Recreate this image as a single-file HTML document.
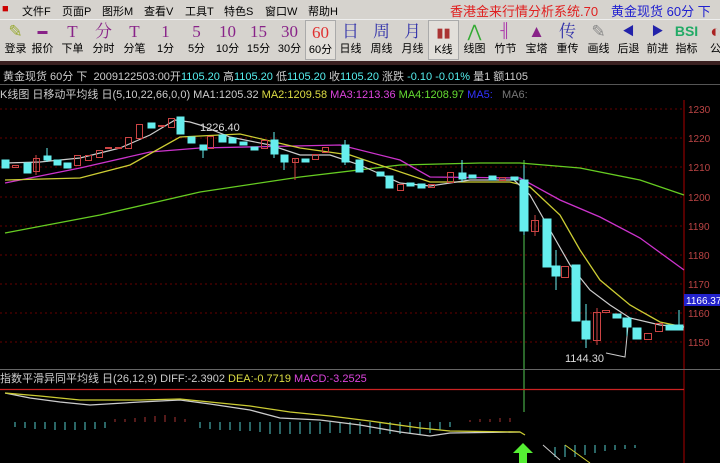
<!DOCTYPE html>
<html><head><meta charset="utf-8">
<style>
*{margin:0;padding:0;box-sizing:border-box}
body{width:720px;height:463px;overflow:hidden;background:#000;font-family:"Liberation Sans","WenQuanYi Zen Hei","Noto Sans CJK SC",sans-serif;position:relative}
.menu{position:absolute;left:0;top:0;width:720px;height:19px;background:#d6d3ce;font-size:11px;color:#000}
.menu span{position:absolute;top:3px}
.tb{position:absolute;left:0;top:19px;width:720px;height:42px;background:#d6d3ce;border-top:1px solid #eee}
.it{position:absolute;top:0;width:31px;text-align:center}
.it b{display:block;font-size:17px;line-height:21px;font-weight:normal;font-family:"Liberation Serif","Noto Serif CJK SC",serif;margin-top:1px}
.it i{display:block;font-style:normal;font-size:11px;color:#000;line-height:14px}
.box{border:1px solid #aaa;background:#e2dfda;height:40px}
.sep{position:absolute;left:0;top:61px;width:720px;height:4px;background:#3a2020}
.info{position:absolute;left:0;top:65px;width:720px;height:18px;background:#000;font-size:11px;color:#ccc;white-space:nowrap;padding:3px 0 0 3px}
.ind{position:absolute;left:0;top:84px;width:720px;height:15px;font-size:11px;color:#ccc;white-space:nowrap;padding:1px 0 0 0;border-top:1px solid #555}
.c{color:#5ee}
</style></head><body>
<div class="menu">
<span style="left:2px;color:#c00">■</span>
<span style="left:22px">文件F</span><span style="left:62px">页面P</span><span style="left:102px">图形M</span><span style="left:144px">查看V</span><span style="left:185px">工具T</span><span style="left:224px">特色S</span><span style="left:265px">窗口W</span><span style="left:308px">帮助H</span>
<span style="left:450px;color:#e02020;font-size:13px;top:1px">香港金来行情分析系统.70</span><span style="left:611px;color:#2020d0;font-size:13px;top:1px">黄金现货 60分 下</span>
</div>
<div class="tb">
<div class="it" style="left:0"><b style="color:#9a3">✎</b><i>登录</i></div>
<div class="it" style="left:27px"><b style="color:#828;font-size:10px;line-height:21px">▬</b><i>报价</i></div>
<div class="it" style="left:57px"><b style="color:#828">T</b><i>下单</i></div>
<div class="it" style="left:88px"><b style="color:#828">分</b><i>分时</i></div>
<div class="it" style="left:119px"><b style="color:#828">T</b><i>分笔</i></div>
<div class="it" style="left:150px"><b style="color:#828">1</b><i>1分</i></div>
<div class="it" style="left:181px"><b style="color:#828">5</b><i>5分</i></div>
<div class="it" style="left:212px"><b style="color:#828">10</b><i>10分</i></div>
<div class="it" style="left:243px"><b style="color:#828">15</b><i>15分</i></div>
<div class="it" style="left:274px"><b style="color:#828">30</b><i>30分</i></div>
<div class="it box" style="left:305px"><b style="color:#e03030">60</b><i>60分</i></div>
<div class="it" style="left:335px"><b style="color:#33a">日</b><i>日线</i></div>
<div class="it" style="left:366px"><b style="color:#33a">周</b><i>周线</i></div>
<div class="it" style="left:397px"><b style="color:#33a">月</b><i>月线</i></div>
<div class="it box" style="left:428px"><b style="color:#a33;font-size:13px">▮▮</b><i>K线</i></div>
<div class="it" style="left:459px"><b style="color:#3a3">⋀</b><i>线图</i></div>
<div class="it" style="left:490px"><b style="color:#a3a;font-size:14px">╢</b><i>竹节</i></div>
<div class="it" style="left:521px"><b style="color:#828">▲</b><i>宝塔</i></div>
<div class="it" style="left:552px"><b style="color:#33a">传</b><i>重传</i></div>
<div class="it" style="left:583px"><b style="color:#888">✎</b><i>画线</i></div>
<div class="it" style="left:613px"><b style="color:#22a;font-size:12px">◀</b><i>后退</i></div>
<div class="it" style="left:642px"><b style="color:#22a;font-size:12px">▶</b><i>前进</i></div>
<div class="it" style="left:671px"><b style="color:#2a6;font-size:14px;font-weight:bold;font-family:'Liberation Sans'">BSI</b><i>指标</i></div>
<div class="it" style="left:700px"><b style="color:#a22">◐</b><i>公</i></div>
</div>
<div class="sep"></div>
<div class="info">黄金现货 60分 下 &nbsp;2009122503:00开<span class="c">1105.20</span> 高<span class="c">1105.20</span> 低<span class="c">1105.20</span> 收<span class="c">1105.20</span> 涨跌 <span class="c">-0.10 -0.01%</span> 量1 额1105</div>
<div class="ind">K线图 日移动平均线 日(5,10,22,66,0,0) MA1:1205.32 <span style="color:#dd4">MA2:1209.58</span> <span style="color:#d4d">MA3:1213.36</span> <span style="color:#6d3">MA4:1208.97</span> <span style="color:#33f">MA5:</span> &nbsp; <span style="color:#777">MA6:</span></div>
<svg style="position:absolute;left:0;top:0" width="720" height="463" viewBox="0 0 720 463">
<g stroke="#600" stroke-dasharray="2 3" stroke-width="1">
<line x1="0" y1="109" x2="684" y2="109"/><line x1="0" y1="138" x2="684" y2="138"/><line x1="0" y1="167" x2="684" y2="167"/><line x1="0" y1="197" x2="684" y2="197"/><line x1="0" y1="226" x2="684" y2="226"/><line x1="0" y1="255" x2="684" y2="255"/><line x1="0" y1="284" x2="684" y2="284"/><line x1="0" y1="313" x2="684" y2="313"/><line x1="0" y1="342" x2="684" y2="342"/>
</g>
<line x1="684" y1="100" x2="684" y2="463" stroke="#a00"/>
<g fill="#b44" font-size="10" font-family="Liberation Sans">
<text x="688" y="113">1230</text><text x="688" y="142">1220</text><text x="688" y="171">1210</text><text x="688" y="201">1200</text><text x="688" y="230">1190</text><text x="688" y="259">1180</text><text x="688" y="288">1170</text><text x="688" y="317">1160</text><text x="688" y="346">1150</text>
</g>
<rect x="684" y="294" width="36" height="12" fill="#22c"/><text x="686" y="304" fill="#fff" font-size="10" font-family="Liberation Sans">1166.37</text>
<line x1="524" y1="160" x2="524" y2="412" stroke="#5c5"/>
<polyline fill="none" stroke="#6c2" stroke-width="1.3" points="5,233 100,215 200,192 300,177 400,165 480,163 520,163 580,168 640,180 684,195"/>
<polyline fill="none" stroke="#c3c" stroke-width="1.3" points="5,183 80,168 150,152 200,148 340,145 400,160 430,177 520,178 560,200 600,217 640,238 684,270"/>
<polyline fill="none" stroke="#cc3" stroke-width="1.3" points="5,180 80,178 130,165 180,137 240,134 300,148 350,155 430,182 510,182 530,187 560,215 580,250 600,280 630,305 660,322 684,327"/>
<polyline fill="none" stroke="#ccc" stroke-width="1.2" points="5,163 40,162 80,158 120,148 150,135 175,120 190,122 200,125 230,137 270,145 300,155 330,155 360,165 400,183 430,186 470,180 514,180 530,195 550,230 570,265 590,290 610,305 630,318 660,325 684,327"/>
<polyline fill="none" stroke="#ccc" points="606,353 625,357 628,326"/>
<text x="200" y="131" fill="#ddd" font-size="11" font-family="Liberation Sans">1226.40</text>
<text x="565" y="362" fill="#ddd" font-size="11" font-family="Liberation Sans">1144.30</text>
<g fill="#6ee" stroke="#6ee">
<line x1="47" y1="148" x2="47" y2="162"/><line x1="203" y1="145" x2="203" y2="158"/><line x1="274" y1="132" x2="274" y2="158"/><line x1="284" y1="155" x2="284" y2="170"/><line x1="345" y1="140" x2="345" y2="165"/><line x1="462" y1="160" x2="462" y2="182"/><line x1="524" y1="165" x2="524" y2="235"/><line x1="556" y1="250" x2="556" y2="290"/><line x1="586" y1="304" x2="586" y2="348"/><line x1="627" y1="318" x2="627" y2="336"/><line x1="679" y1="310" x2="679" y2="330"/>
<rect x="2" y="160" width="7" height="8"/><rect x="24" y="163" width="7" height="10"/><rect x="44" y="156" width="7" height="4"/><rect x="54" y="160" width="7" height="5"/><rect x="64" y="163" width="7" height="5"/><rect x="148" y="123" width="7" height="5"/><rect x="177" y="117" width="7" height="17"/><rect x="188" y="137" width="7" height="6"/><rect x="200" y="145" width="7" height="5"/><rect x="219" y="135" width="7" height="7"/><rect x="229" y="138" width="7" height="5"/><rect x="240" y="142" width="7" height="3"/><rect x="251" y="147" width="7" height="3"/><rect x="271" y="140" width="7" height="14"/><rect x="281" y="155" width="7" height="7"/><rect x="302" y="159" width="7" height="3"/><rect x="342" y="145" width="7" height="17"/><rect x="356" y="160" width="7" height="12"/><rect x="377" y="172" width="7" height="4"/><rect x="386" y="176" width="7" height="12"/><rect x="407" y="183" width="7" height="3"/><rect x="418" y="184" width="7" height="4"/><rect x="459" y="173" width="7" height="6"/><rect x="469" y="175" width="7" height="3"/><rect x="489" y="176" width="7" height="4"/><rect x="511" y="177" width="7" height="3"/><rect x="520" y="180" width="8" height="51"/><rect x="543" y="219" width="8" height="48"/><rect x="552" y="266" width="8" height="10"/><rect x="572" y="265" width="8" height="56"/><rect x="582" y="321" width="8" height="18"/><rect x="613" y="314" width="8" height="4"/><rect x="623" y="318" width="8" height="9"/><rect x="633" y="328" width="8" height="11"/><rect x="666" y="325" width="8" height="5"/><rect x="675" y="325" width="8" height="5"/>
</g>
<g fill="none" stroke="#c44">
<line x1="36" y1="155" x2="36" y2="175"/><line x1="295" y1="158" x2="295" y2="180"/><line x1="535" y1="215" x2="535" y2="236"/><line x1="597" y1="308" x2="597" y2="345"/>
<rect x="12.5" y="165.5" width="6" height="2"/><rect x="33.5" y="158.5" width="6" height="13"/><rect x="74.5" y="155.5" width="6" height="10"/><rect x="85.5" y="155.5" width="6" height="5"/><rect x="96.5" y="150.5" width="6" height="7"/><rect x="105.5" y="147.5" width="6" height="1"/><rect x="115.5" y="147.5" width="6" height="1"/><rect x="125.5" y="137.5" width="6" height="11"/><rect x="136.5" y="124.5" width="6" height="14"/><rect x="158.5" y="125.5" width="6" height="1"/><rect x="168.5" y="118.5" width="6" height="9"/><rect x="207.5" y="136.5" width="6" height="12"/><rect x="261.5" y="140.5" width="6" height="8"/><rect x="292.5" y="158.5" width="6" height="4"/><rect x="312.5" y="154.5" width="6" height="5"/><rect x="322.5" y="147.5" width="6" height="5"/><rect x="397.5" y="184.5" width="6" height="6"/><rect x="428.5" y="184.5" width="6" height="3"/><rect x="447.5" y="172.5" width="6" height="10"/><rect x="499.5" y="177.5" width="6" height="3"/><rect x="531.5" y="220.5" width="7" height="11"/><rect x="561.5" y="266.5" width="7" height="11"/><rect x="593.5" y="312.5" width="7" height="28"/><rect x="602.5" y="310.5" width="7" height="2"/><rect x="644.5" y="333.5" width="7" height="6"/><rect x="655.5" y="323.5" width="7" height="8"/>
</g>
<line x1="0" y1="369.5" x2="720" y2="369.5" stroke="#666"/>
<text x="0" y="382" fill="#ccc" font-size="11" font-family="Liberation Sans,WenQuanYi Zen Hei,sans-serif">指数平滑异同平均线 日(26,12,9) DIFF:-2.3902 <tspan fill="#dd4">DEA:-0.7719</tspan> <tspan fill="#d4d">MACD:-3.2525</tspan></text>
<line x1="0" y1="389.5" x2="684" y2="389.5" stroke="#c22" stroke-width="1.2"/>
<g stroke="#5cc">
<path d="M15 422v5M25 422v6M35 422v7M45 422v7M55 422v8M65 422v8M75 422v8M85 422v8M95 422v7M105 422v6M200 422v6M210 422v7M220 422v8M230 422v8M240 422v9M250 422v9M260 422v10M270 422v12M280 422v12M290 422v12M300 422v12M310 422v12M320 422v12M330 422v11M340 422v11M350 422v12M360 422v12M370 422v12M380 422v12M390 422v12M400 422v12M410 422v12M420 422v12M430 422v11M440 422v8M450 422v5M555 447v10M565 445v12M575 445v12M585 445v10M595 445v8M605 445v6M615 445v5M625 445v4M635 445v3"/>
</g>
<g stroke="#a33"><path d="M115 422v-3M125 422v-3M135 422v-4M145 422v-5M155 422v-6M165 422v-7M175 422v-5M185 422v-3M470 422v-2M480 422v-3M490 422v-3M500 422v-4M510 422v-4"/></g>
<polyline fill="none" stroke="#ccc" stroke-width="1.3" points="5,393 30,398 60,402 90,405 140,402 180,400 210,404 250,410 280,418 320,420 360,425 400,432 430,436 450,433 520,432"/>
<polyline fill="none" stroke="#cc3" stroke-width="1.3" points="5,393 40,396 80,400 140,400 180,399 210,402 250,406 290,412 330,416 370,421 420,428 450,431 520,432 525,435"/>
<polyline fill="none" stroke="#ccc" points="543,445 560,460"/>
<polyline fill="none" stroke="#cc3" points="565,445 590,463"/>
<polygon points="523,443 533,453 527,453 527,463 519,463 519,453 513,453" fill="#5e3"/>
</svg>
</body></html>
